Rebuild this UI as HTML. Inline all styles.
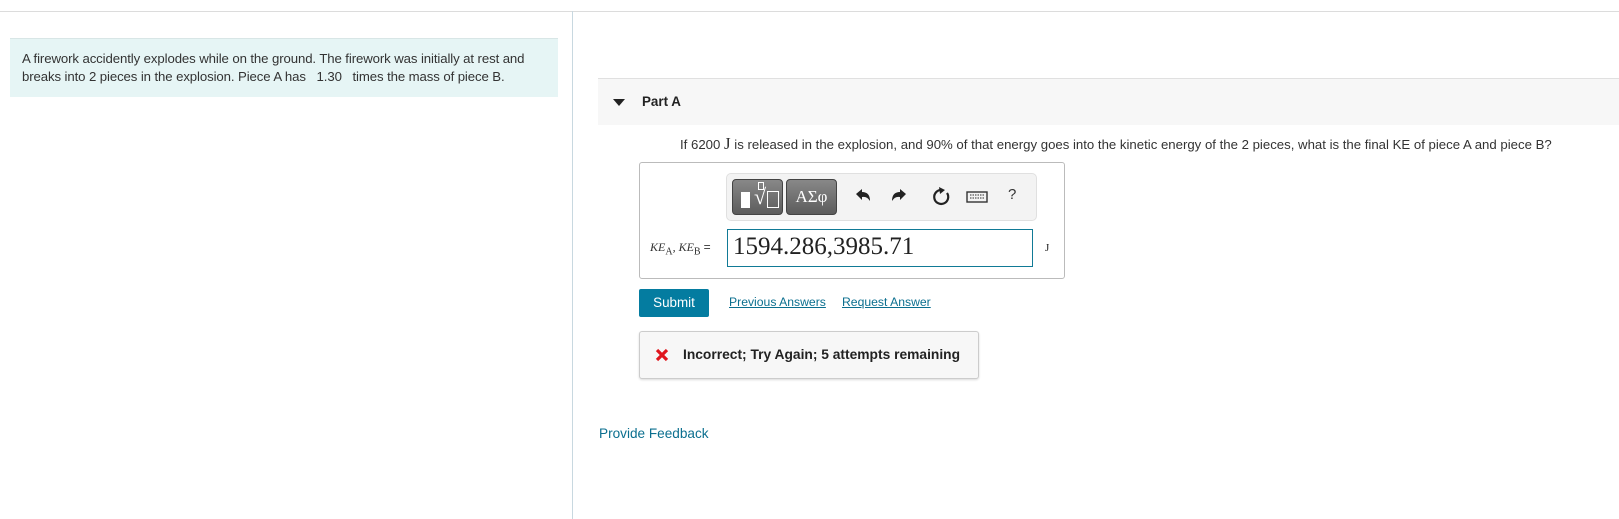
<!DOCTYPE html>
<html><head><style>
body{margin:0;width:1619px;height:519px;background:#fff;font-family:"Liberation Sans",Arial,sans-serif;position:relative;overflow:hidden;color:#222}
.a{position:absolute}
</style></head><body>
<div class="a" style="left:0;top:11px;width:1619px;height:1px;background:#dcdcdc"></div>
<div class="a" style="left:572px;top:11px;width:1px;height:508px;background:#c8d8e0"></div>
<div class="a" style="left:10px;top:38px;width:548px;height:58px;background:#e6f5f5;border-top:1px solid #d8e6e6"></div>
<div class="a" style="left:22px;top:50px;font-size:13.2px;line-height:18px;color:#333;letter-spacing:-0.1px">A firework accidently explodes while on the ground. The firework was initially at rest and<br>breaks into 2 pieces in the explosion. Piece A has &nbsp; 1.30 &nbsp; times the mass of piece B.</div>

<div class="a" style="left:598px;top:78px;width:1021px;height:46px;background:#f7f7f7;border-top:1px solid #e0e0e0"></div>
<div class="a" style="left:613px;top:99px;width:0;height:0;border-left:6px solid transparent;border-right:6px solid transparent;border-top:7px solid #222"></div>
<div class="a" style="left:642px;top:94px;font-size:13.4px;font-weight:bold">Part A</div>
<div class="a" style="left:680px;top:134px;font-size:13.2px;color:#333">If 6200 <span style="font-family:'Liberation Serif',serif;font-size:17px">J</span> is released in the explosion, and 90% of that energy goes into the kinetic energy of the 2 pieces, what is the final KE of piece A and piece B?</div>

<div class="a" style="left:639px;top:162px;width:424px;height:115px;border:1px solid #bbb;border-radius:3px"></div>
<div class="a" style="left:726px;top:173px;width:309px;height:46px;background:#f3f3f3;border:1px solid #e0e0e0;border-radius:5px"></div>
<div class="a" style="left:732px;top:179px;width:49px;height:34px;background:linear-gradient(#888,#5c5c5c);border:1px solid #444;border-radius:4px;color:#fff">
 <div class="a" style="left:8px;top:12px;width:9px;height:16px;background:#fff"></div>
 <div class="a" style="left:21px;top:4px;font-family:'Liberation Serif',serif;font-size:22px;line-height:26px">√</div>
 <div class="a" style="left:34px;top:11px;width:10px;height:15px;border:1px solid #fff"></div>
 <div class="a" style="left:25px;top:2px;width:4px;height:6px;border:1px solid #fff"></div>
</div>
<div class="a" style="left:786px;top:179px;width:49px;height:34px;background:linear-gradient(#888,#5c5c5c);border:1px solid #444;border-radius:4px;color:#fff;font-family:'Liberation Serif',serif;font-size:17px;line-height:34px;text-align:center">ΑΣφ</div>
<svg class="a" style="left:852px;top:186px" width="180" height="20" viewBox="0 0 180 20">
 <path d="M4 8 L10 3 L10 6 Q18 6 18 15 Q15 10 10 11 L10 14 Z" fill="#222"/>
 <path d="M54 8 L48 3 L48 6 Q40 6 40 15 Q43 10 48 11 L48 14 Z" fill="#222"/>
 <path d="M90 4 A7 7 0 1 0 95 7" fill="none" stroke="#222" stroke-width="2.2"/>
 <path d="M87 1 L93 4 L88 8 Z" fill="#222"/>
 <rect x="115" y="6" width="20" height="10" fill="none" stroke="#333" stroke-width="1.4"/>
 <path d="M118 9h14M118 12h14" stroke="#555" stroke-width="1.2" stroke-dasharray="1.5 1"/>
</svg>
<div class="a" style="left:1008px;top:186px;font-size:15px;color:#333">?</div>
<div class="a" style="left:650px;top:240px;font-family:'Liberation Serif',serif;font-size:12px;font-style:italic;color:#333">KE<sub style="font-style:normal;font-size:10px">A</sub>, KE<sub style="font-style:normal;font-size:10px">B</sub> <span style="font-style:normal;font-family:'Liberation Sans',sans-serif">=</span></div>
<div class="a" style="left:727px;top:229px;width:304px;height:36px;border:1px solid #117a96"></div>
<div class="a" style="left:733px;top:233px;font-family:'Liberation Serif',serif;font-size:25px;color:#222">1594.286,3985.71</div>
<div class="a" style="left:1045px;top:242px;font-family:'Liberation Serif',serif;font-size:11px">J</div>

<div class="a" style="left:639px;top:289px;width:70px;height:28px;background:#047ca0;border-radius:2px;color:#fff;font-size:13.4px;line-height:28px;text-align:center">Submit</div>
<div class="a" style="left:729px;top:295px;font-size:12.2px;color:#0b6f8f;text-decoration:underline">Previous Answers</div>
<div class="a" style="left:842px;top:295px;font-size:12.2px;color:#0b6f8f;text-decoration:underline">Request Answer</div>

<div class="a" style="left:639px;top:331px;width:338px;height:46px;background:#f7f7f7;border:1px solid #ccc;border-radius:3px;box-shadow:0 1px 2px rgba(0,0,0,.15)"></div>
<svg class="a" style="left:655px;top:348px" width="14" height="14"><path d="M2 2L12 12M12 2L2 12" stroke="#e0161e" stroke-width="3.2"/></svg>
<div class="a" style="left:683px;top:347px;font-size:13.8px;font-weight:bold;color:#222">Incorrect; Try Again; 5 attempts remaining</div>

<div class="a" style="left:599px;top:426px;font-size:13.6px;color:#0b6f8f">Provide Feedback</div>
</body></html>
